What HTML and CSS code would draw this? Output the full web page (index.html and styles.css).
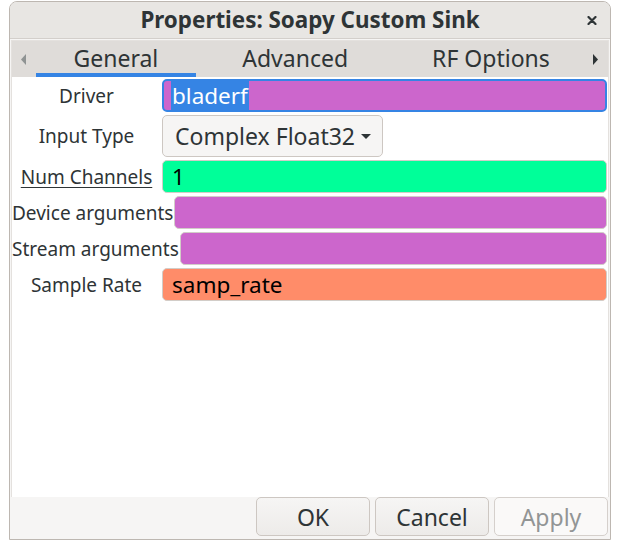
FILE: index.html
```html
<!DOCTYPE html>
<html lang="en">
<head>
<meta charset="utf-8">
<title>Properties: Soapy Custom Sink</title>
<link rel="stylesheet" href="styles.css">
</head>
<body>
<div class="window">
  <div class="titlebar">
    <span class="title">Properties: Soapy Custom Sink</span>
    <span class="close"><svg width="10" height="9" viewBox="0 0 10 9"><path d="M1.5 1 L8.5 8 M8.5 1 L1.5 8" stroke="#2e3436" stroke-width="2.2" stroke-linecap="round"/></svg></span>
  </div>
  <div class="notebook">
    <div class="tabs">
      <span class="arrow arrow-left"><svg width="5" height="11" viewBox="0 0 5 11"><path d="M5 0 L0 5.5 L5 11 Z" fill="#8f9393"/></svg></span>
      <div class="tab tab-active">General</div>
      <div class="tab">Advanced</div>
      <div class="tab">RF Options</div>
      <span class="tabs-fill"></span>
      <span class="arrow arrow-right"><svg width="5" height="11" viewBox="0 0 5 11"><path d="M0 0 L5 5.5 L0 11 Z" fill="#2e3436"/></svg></span>
    </div>
    <div class="page">
      <div class="row">
        <span class="label">Driver</span>
        <div class="entry entry-string entry-focus"><span class="selection">bladerf</span></div>
      </div>
      <div class="row">
        <span class="label">Input Type</span>
        <div class="combo"><span>Complex Float32</span><svg class="combo-arrow" width="10" height="5" viewBox="0 0 10 5"><path d="M0 0 L10 0 L5 5 Z" fill="#2e3436"/></svg></div>
      </div>
      <div class="row">
        <span class="label label-link">Num Channels</span>
        <div class="entry entry-int">1</div>
      </div>
      <div class="row">
        <span class="label">Device arguments</span>
        <div class="entry entry-string"></div>
      </div>
      <div class="row">
        <span class="label">Stream arguments</span>
        <div class="entry entry-string"></div>
      </div>
      <div class="row">
        <span class="label">Sample Rate</span>
        <div class="entry entry-real">samp_rate</div>
      </div>
    </div>
  </div>
  <div class="actions">
    <button class="btn">OK</button>
    <button class="btn">Cancel</button>
    <button class="btn btn-disabled">Apply</button>
  </div>
</div>
</body>
</html>
```

FILE: styles.css
```css
* { box-sizing: border-box; }

body {
  margin: 0;
  background: #ffffff;
  font-family: "Noto Sans", "Open Sans", sans-serif;
  color: #2e3436;
}

.window {
  margin: 1px 0 0 9px;
  width: 602px;
  height: 539px;
  border: 1px solid #bdb7b1;
  border-radius: 8px 8px 0 0;
  background: #f6f5f4;
  display: flex;
  flex-direction: column;
  overflow: hidden;
}

.titlebar {
  height: 37px;
  flex: none;
  background: #e8e6e3;
  border-bottom: 1px solid #d3cfcb;
  display: grid;
  grid-template-columns: 1fr auto 1fr;
  align-items: center;
}

.title {
  grid-column: 2;
  font-weight: bold;
  font-size: 22.4px;
  line-height: 1;
  color: #2e3436;
  white-space: nowrap;
}

.close {
  grid-column: 3;
  justify-self: end;
  margin-right: 13px;
  display: flex;
}

.notebook {
  flex: 1;
  display: flex;
  flex-direction: column;
  margin: 1px 1px 0 1px;
  border: 1px solid #e4e1de;
  border-bottom: none;
}

.tabs {
  height: 36px;
  flex: none;
  background: #dfdcd9;
  display: flex;
  align-items: stretch;
  overflow: hidden;
}

.arrow {
  flex: none;
  display: flex;
  align-items: center;
  padding-top: 1px;
}

.arrow-left { width: 24px; justify-content: center; padding-right: 1px; }
.arrow-right { width: 21px; justify-content: flex-start; padding-left: 6px; }

.tab {
  flex: none;
  display: flex;
  align-items: center;
  padding: 3px 37.5px 0;
  margin-right: 9px;
  font-size: 23px;
  line-height: 1;
  color: #2e3436;
  white-space: nowrap;
  border-bottom: 4px solid transparent;
}

.tab:nth-child(4) { margin-right: 0; }
.tab-active { border-bottom-color: #3584e4; }
.tabs-fill { flex: 1 1 0; min-width: 0; }

.page {
  flex: 1;
  background: #ffffff;
  padding: 2px 1px 0 0;
  display: flex;
  flex-direction: column;
  gap: 3px;
}

.row {
  display: flex;
  align-items: center;
}

.label {
  min-width: 150px;
  text-align: center;
  font-size: 19px;
  color: #2e3436;
  white-space: nowrap;
  padding-right: 1px;
}

.label-link { text-decoration: underline; text-underline-offset: 3px; }

.entry {
  flex: 1;
  height: 33px;
  border: 1px solid #d2cdc8;
  border-radius: 5px;
  padding-left: 9px;
  display: flex;
  align-items: center;
  font-size: 22.5px;
  color: #000000;
}

.entry-string { background: #cc66cc; }
.entry-int { background: #00ff99; }
.entry-real { background: #ff8c69; }

.entry-focus {
  border: 2px solid #3584e4;
  padding-left: 7px;
  align-items: stretch;
}

.selection {
  background: #3584e4;
  color: #ffffff;
  display: flex;
  align-items: center;
  padding: 0 1px;
}

.combo {
  width: 221px;
  height: 42px;
  background: #f6f5f4;
  border: 1px solid #cdc7c2;
  border-radius: 5px;
  display: flex;
  align-items: center;
  padding: 0 10px 0 12px;
  gap: 6px;
  font-size: 23px;
  color: #2e3436;
  white-space: nowrap;
}

.combo-arrow { flex: none; }

.actions {
  height: 42px;
  flex: none;
  display: flex;
  justify-content: flex-end;
  align-items: flex-start;
  gap: 5px;
  padding-right: 2px;
}

.btn {
  width: 114px;
  height: 39px;
  background: linear-gradient(#f6f5f4, #edebe9);
  border: 1px solid #cdc7c2;
  border-radius: 5px;
  font-family: "Noto Sans", "Open Sans", sans-serif;
  font-size: 23px;
  color: #2e3436;
  padding: 0;
}

.btn-disabled {
  background: #faf9f8;
  border-color: #d5d0cc;
  color: #929595;
}
```
